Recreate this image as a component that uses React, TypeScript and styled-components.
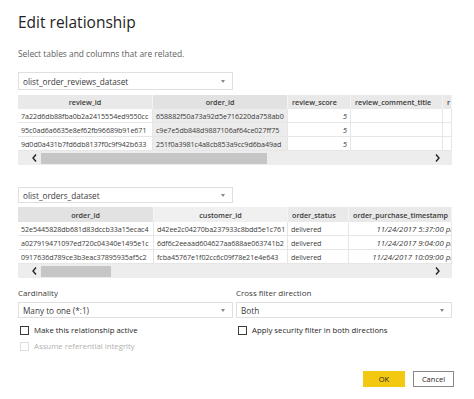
import React from "react";
import styled, { createGlobalStyle } from "styled-components";

const GlobalStyle = createGlobalStyle`
  html, body {
    margin: 0;
    padding: 0;
    background: #ffffff;
  }
  body {
    font-family: "Open Sans", "Noto Sans", sans-serif;
    color: #252423;
  }
`;

const Dialog = styled.div`
  width: 474px;
  height: 399px;
  box-sizing: border-box;
  padding: 11px 22px 0 18px;
  display: flex;
  flex-direction: column;
  overflow: hidden;
`;

const Title = styled.h1`
  margin: 0;
  font-size: 15.5px;
  font-weight: 400;
  line-height: 22px;
  color: #252423;
`;

const Subtitle = styled.p`
  margin: 14px 0 0;
  font-size: 8.4px;
  line-height: 13px;
  color: #605e5c;
`;

const Select = styled.div<{ $width: number; $height: number; $top: number }>`
  width: ${(p) => p.$width}px;
  height: ${(p) => p.$height}px;
  margin-top: ${(p) => p.$top}px;
  box-sizing: border-box;
  border: 1px solid #e1dfdd;
  display: flex;
  align-items: center;
  justify-content: space-between;
  padding: 0 7px 0 4px;
  font-size: 8.2px;
  color: #3b3a39;
  background: #fff;
`;

const Caret = () => (
  <svg width="4" height="3" viewBox="0 0 4 3">
    <path d="M0 0 L4 0 L2 3 Z" fill="#8a8886" />
  </svg>
);

const TableBox = styled.div<{ $top: number }>`
  margin-top: ${(p) => p.$top}px;
  width: 434px;
  overflow: hidden;
`;

const Row = styled.div<{ $cols: string; $height: number }>`
  display: grid;
  grid-template-columns: ${(p) => p.$cols};
  height: ${(p) => p.$height}px;
`;

const HeadCell = styled.div<{ $align?: string; $shade?: string }>`
  background: ${(p) => p.$shade || "#e9e9e9"};
  font-size: 7.2px;
  font-weight: 600;
  color: #3b3a39;
  display: flex;
  align-items: center;
  justify-content: ${(p) => (p.$align === "left" ? "flex-start" : "center")};
  padding: 0 4px;
  white-space: nowrap;
  overflow: hidden;
  border-right: 1px solid #f4f4f4;
`;

const Cell = styled.div<{ $align?: string; $shade?: boolean; $italic?: boolean }>`
  background: ${(p) => (p.$shade ? "#ececec" : "#ffffff")};
  font-size: ${(p) => (p.$italic ? 7.8 : 7.15)}px;
  letter-spacing: ${(p) => (p.$italic ? 0 : -0.05)}px;
  font-style: ${(p) => (p.$italic ? "italic" : "normal")};
  color: #3b3a39;
  display: flex;
  align-items: center;
  justify-content: ${(p) => (p.$align === "right" ? "flex-end" : "flex-start")};
  padding: 0 3px;
  white-space: nowrap;
  overflow: hidden;
  border-right: 1px solid #e6e6e6;
  border-bottom: 1px solid #e6e6e6;
  box-sizing: border-box;
`;

/* timestamps are right aligned and the last letter runs past the column edge */
const Clipped = styled.span`
  margin-right: -9px;
  flex-shrink: 0;
`;

const ScrollBar = styled.div`
  height: 14px;
  background: #ededed;
  display: flex;
  align-items: center;
  padding: 0 12px 0 14px;
  gap: 4px;
`;

const Thumb = styled.div<{ $width: number }>`
  width: ${(p) => p.$width}px;
  height: 11px;
  background: #c6c6c6;
`;

const Spacer = styled.div`
  flex: 1;
`;

const Chevron = ({ dir }: { dir: "left" | "right" }) => (
  <svg width="5" height="8" viewBox="0 0 5 8">
    <path
      d={dir === "left" ? "M4 0.5 L1 4 L4 7.5" : "M1 0.5 L4 4 L1 7.5"}
      fill="none"
      stroke="#252423"
      strokeWidth="1.4"
    />
  </svg>
);

const Options = styled.div`
  margin-top: 9px;
  display: grid;
  grid-template-columns: 215px 216px;
  column-gap: 3px;
`;

const Field = styled.div`
  display: flex;
  flex-direction: column;
`;

const Label = styled.div`
  font-size: 8px;
  line-height: 12px;
  color: #3b3a39;
`;

const Check = styled.label<{ $disabled?: boolean; $top: number }>`
  display: flex;
  align-items: center;
  gap: 5px;
  margin-top: ${(p) => p.$top}px;
  padding-left: 2px;
  font-size: 7.8px;
  line-height: 12px;
  color: ${(p) => (p.$disabled ? "#b3b0ad" : "#252423")};
`;

const Box = styled.span<{ $disabled?: boolean }>`
  width: 7px;
  height: 7px;
  border: 1px solid ${(p) => (p.$disabled ? "#dddddd" : "#3b3a39")};
  display: inline-block;
`;

const Footer = styled.div`
  margin-top: 19px;
  display: flex;
  justify-content: flex-end;
  gap: 8px;
  margin-right: -2px;
`;

const Button = styled.button<{ $primary?: boolean }>`
  width: ${(p) => (p.$primary ? 42 : 41)}px;
  height: 16px;
  box-sizing: border-box;
  border: 1px solid ${(p) => (p.$primary ? "#f2c811" : "#8a8886")};
  background: ${(p) => (p.$primary ? "#f2c811" : "#ffffff")};
  font-family: inherit;
  font-size: 7.5px;
  color: #252423;
  padding: 0;
`;

const cols1 = "135px 135px 63px 92px 9px";
const cols2 = "136px 134px 61px 103px";

const reviews = [
  ["7a22d6db88fba0b2a2415554ed9550cc", "658882f50a73a92d5e716220da758ab0"],
  ["95c0ad6a6635e8ef62fb96689b91e671", "c9e7e5db848d9887106af64ce027ff75"],
  ["9d0d0a431b7fd6db8137f0c9f942b633", "251f0a3981c4a8cb853a9cc9d6ba49ad"],
];

const orders = [
  ["52e5445828db681d83dccb33a15ecac4", "d42ee2c04270ba237933c8bdd5e1c761", "11/24/2017 5:37:00 pm"],
  ["a027919471097ed720c04340e1495e1c", "6df6c2eeaad604627aa688ae063741b2", "11/24/2017 9:04:00 pm"],
  ["0917636d789ce3b3eac37895935af5c2", "fcba45767e1f02cc6c09f78e21e4e643", "11/24/2017 10:09:00 pm"],
];

export default function App() {
  return (
    <>
      <GlobalStyle />
      <Dialog>
        <Title>Edit relationship</Title>
        <Subtitle>Select tables and columns that are related.</Subtitle>

        <Select $width={215} $height={18} $top={12}>
          <span>olist_order_reviews_dataset</span>
          <Caret />
        </Select>
        <TableBox $top={5}>
          <Row $cols={cols1} $height={14}>
            <HeadCell>review_id</HeadCell>
            <HeadCell $shade="#e2e2e2">order_id</HeadCell>
            <HeadCell $align="left">review_score</HeadCell>
            <HeadCell $align="left">review_comment_title</HeadCell>
            <HeadCell $align="left">r</HeadCell>
          </Row>
          {reviews.map((r) => (
            <Row $cols={cols1} $height={14} key={r[0]}>
              <Cell>{r[0]}</Cell>
              <Cell $shade>{r[1]}</Cell>
              <Cell $align="right" $italic>
                5
              </Cell>
              <Cell />
              <Cell />
            </Row>
          ))}
          <ScrollBar>
            <Chevron dir="left" />
            <Thumb $width={226} />
            <Spacer />
            <Chevron dir="right" />
          </ScrollBar>
        </TableBox>

        <Select $width={215} $height={16} $top={22}>
          <span>olist_orders_dataset</span>
          <Caret />
        </Select>
        <TableBox $top={4}>
          <Row $cols={cols2} $height={15}>
            <HeadCell $shade="#e2e2e2">order_id</HeadCell>
            <HeadCell $shade="#f0f0f0">customer_id</HeadCell>
            <HeadCell $align="left">order_status</HeadCell>
            <HeadCell $align="left">order_purchase_timestamp</HeadCell>
          </Row>
          {orders.map((o) => (
            <Row $cols={cols2} $height={14} key={o[0]}>
              <Cell>{o[0]}</Cell>
              <Cell>{o[1]}</Cell>
              <Cell>delivered</Cell>
              <Cell $align="right" $italic>
                <Clipped>{o[2]}</Clipped>
              </Cell>
            </Row>
          ))}
          <ScrollBar>
            <Chevron dir="left" />
            <Thumb $width={70} />
            <Spacer />
            <Chevron dir="right" />
          </ScrollBar>
        </TableBox>

        <Options>
          <Field>
            <Label>Cardinality</Label>
            <Select $width={215} $height={16} $top={3}>
              <span>Many to one (*:1)</span>
              <Caret />
            </Select>
            <Check $top={6}>
              <Box />
              Make this relationship active
            </Check>
            <Check $top={4} $disabled>
              <Box $disabled />
              Assume referential integrity
            </Check>
          </Field>
          <Field>
            <Label>Cross filter direction</Label>
            <Select $width={216} $height={16} $top={3}>
              <span>Both</span>
              <Caret />
            </Select>
            <Check $top={6}>
              <Box />
              Apply security filter in both directions
            </Check>
          </Field>
        </Options>

        <Footer>
          <Button $primary>OK</Button>
          <Button>Cancel</Button>
        </Footer>
      </Dialog>
    </>
  );
}
